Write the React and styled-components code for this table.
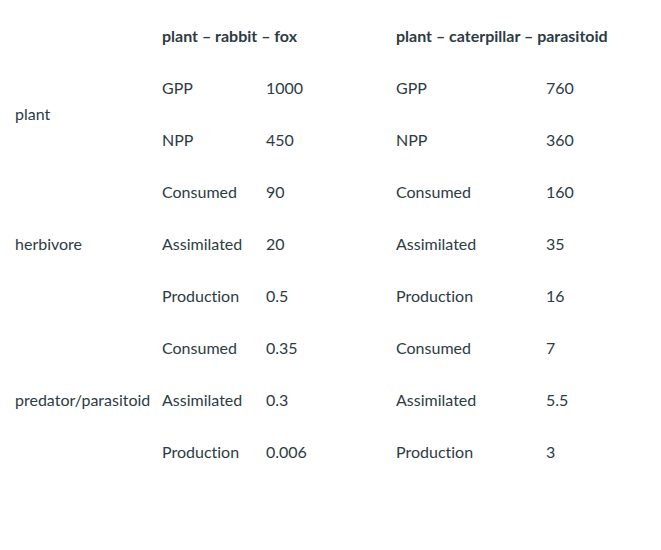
import React from "react";
import styled, { createGlobalStyle } from "styled-components";

const GlobalStyle = createGlobalStyle`
  body {
    margin: 0;
    background: #ffffff;
    font-family: Lato, "Open Sans", sans-serif;
    color: #2d3b45;
  }
`;

const Page = styled.div`
  padding: 10px 0 0 15px;
`;

const Table = styled.table`
  border-collapse: collapse;
  table-layout: fixed;
  font-size: 16px;
  line-height: 24px;
  font-variant-ligatures: none;
`;

const Head = styled.th`
  height: 52px;
  padding: 0;
  text-align: left;
  vertical-align: middle;
  font-weight: 700;
  white-space: nowrap;
`;

const Cell = styled.td`
  height: 52px;
  padding: 0;
  vertical-align: middle;
  white-space: nowrap;
`;

const rows = [
  ["plant", 2, "GPP", "1000", "GPP", "760"],
  [null, 0, "NPP", "450", "NPP", "360"],
  ["herbivore", 3, "Consumed", "90", "Consumed", "160"],
  [null, 0, "Assimilated", "20", "Assimilated", "35"],
  [null, 0, "Production", "0.5", "Production", "16"],
  ["predator/parasitoid", 3, "Consumed", "0.35", "Consumed", "7"],
  [null, 0, "Assimilated", "0.3", "Assimilated", "5.5"],
  [null, 0, "Production", "0.006", "Production", "3"],
];

export default function App() {
  return (
    <>
      <GlobalStyle />
      <Page>
        <Table>
          <colgroup>
            <col style={{ width: 147 }} />
            <col style={{ width: 104 }} />
            <col style={{ width: 130 }} />
            <col style={{ width: 150 }} />
            <col style={{ width: 80 }} />
          </colgroup>
          <thead>
            <tr>
              <Head />
              <Head colSpan={2}>plant – rabbit – fox</Head>
              <Head colSpan={2}>plant – caterpillar – parasitoid</Head>
            </tr>
          </thead>
          <tbody>
            {rows.map(([level, span, a, av, b, bv], i) => (
              <tr key={i}>
                {level && <Cell rowSpan={span}>{level}</Cell>}
                <Cell>{a}</Cell>
                <Cell>{av}</Cell>
                <Cell>{b}</Cell>
                <Cell>{bv}</Cell>
              </tr>
            ))}
          </tbody>
        </Table>
      </Page>
    </>
  );
}
